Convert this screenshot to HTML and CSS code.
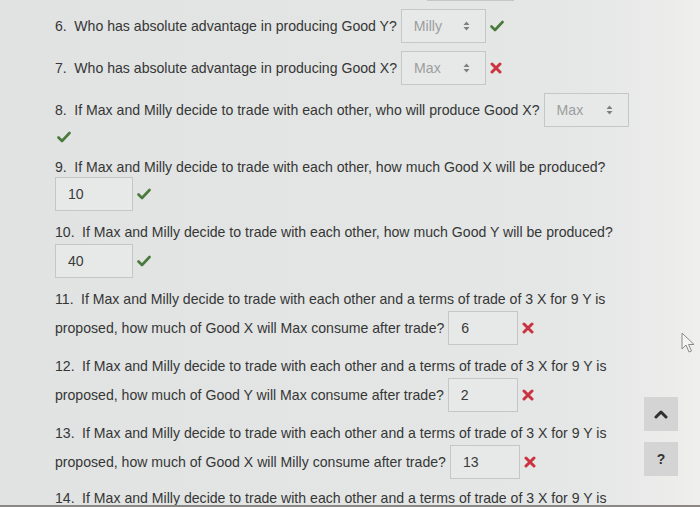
FILE: index.html
```html
<!DOCTYPE html>
<html>
<head>
<meta charset="utf-8">
<link rel="stylesheet" href="styles.css">
</head>
<body>
<div class="page">
  <main class="questions">
    <div class="row prev"><span class="field select"></span></div>

    <div class="row q-first">
      <span class="qtext"><span class="num">6.</span>Who has absolute advantage in producing Good Y?</span>
      <span class="field select"><span>Milly</span><svg class="arrows" width="7" height="10" viewBox="0 0 7 10"><path d="M3.5 0.5 L6.5 4 L0.5 4 Z M0.5 6 L6.5 6 L3.5 9.5 Z"/></svg></span>
      <svg class="mark check" width="14" height="12" viewBox="0 0 14 12"><path d="M1.5 6.5 L5 10 L12.5 2"/></svg>
    </div>

    <div class="row q-tight">
      <span class="qtext"><span class="num">7.</span>Who has absolute advantage in producing Good X?</span>
      <span class="field select"><span>Max</span><svg class="arrows" width="7" height="10" viewBox="0 0 7 10"><path d="M3.5 0.5 L6.5 4 L0.5 4 Z M0.5 6 L6.5 6 L3.5 9.5 Z"/></svg></span>
      <svg class="mark cross" width="12" height="12" viewBox="0 0 12 12"><path d="M2 2 L10 10 M10 2 L2 10"/></svg>
    </div>

    <div class="row q-tight">
      <span class="qtext"><span class="num">8.</span>If Max and Milly decide to trade with each other, who will produce Good X?</span>
      <span class="field select"><span>Max</span><svg class="arrows" width="7" height="10" viewBox="0 0 7 10"><path d="M3.5 0.5 L6.5 4 L0.5 4 Z M0.5 6 L6.5 6 L3.5 9.5 Z"/></svg></span>
    </div>
    <div class="line mark-line">
      <svg class="check" width="14" height="12" viewBox="0 0 14 12"><path d="M1.5 6.5 L5 10 L12.5 2"/></svg>
    </div>

    <div class="line q"><span class="num">9.</span>If Max and Milly decide to trade with each other, how much Good X will be produced?</div>
    <div class="row field-row-first">
      <span class="field input wide">10</span>
      <svg class="mark check" width="14" height="12" viewBox="0 0 14 12"><path d="M1.5 6.5 L5 10 L12.5 2"/></svg>
    </div>

    <div class="line q"><span class="num">10.</span>If Max and Milly decide to trade with each other, how much Good Y will be produced?</div>
    <div class="row field-row">
      <span class="field input wide">40</span>
      <svg class="mark check" width="14" height="12" viewBox="0 0 14 12"><path d="M1.5 6.5 L5 10 L12.5 2"/></svg>
    </div>

    <div class="line q"><span class="num">11.</span>If Max and Milly decide to trade with each other and a terms of trade of 3 X for 9 Y is</div>
    <div class="row field-row">
      <span class="qtext">proposed, how much of Good X will Max consume after trade?</span>
      <span class="field input">6</span>
      <svg class="mark cross" width="12" height="12" viewBox="0 0 12 12"><path d="M2 2 L10 10 M10 2 L2 10"/></svg>
    </div>

    <div class="line q"><span class="num">12.</span>If Max and Milly decide to trade with each other and a terms of trade of 3 X for 9 Y is</div>
    <div class="row field-row">
      <span class="qtext">proposed, how much of Good Y will Max consume after trade?</span>
      <span class="field input">2</span>
      <svg class="mark cross" width="12" height="12" viewBox="0 0 12 12"><path d="M2 2 L10 10 M10 2 L2 10"/></svg>
    </div>

    <div class="line q"><span class="num">13.</span>If Max and Milly decide to trade with each other and a terms of trade of 3 X for 9 Y is</div>
    <div class="row field-row">
      <span class="qtext">proposed, how much of Good X will Milly consume after trade?</span>
      <span class="field input">13</span>
      <svg class="mark cross" width="12" height="12" viewBox="0 0 12 12"><path d="M2 2 L10 10 M10 2 L2 10"/></svg>
    </div>

    <div class="line q last"><span class="num">14.</span>If Max and Milly decide to trade with each other and a terms of trade of 3 X for 9 Y is</div>
  </main>

  <aside class="side">
    <button class="side-btn" type="button" aria-label="Scroll to top">
      <svg width="14" height="10" viewBox="0 0 14 10"><path d="M2 8 L7 3 L12 8"/></svg>
    </button>
    <button class="side-btn help" type="button">?</button>
  </aside>
</div>

<svg class="cursor" width="16" height="22" viewBox="0 0 16 22"><path d="M1 1 L1 17 L5 13 L8 20 L10.5 19 L7.5 12.5 L13 12.5 Z"/></svg>
<div class="bezel"></div>
</body>
</html>
```

FILE: styles.css
```css
html, body {
  margin: 0;
  height: 507px;
  overflow: hidden;
}

body {
  background: linear-gradient(90deg, #e0e3e2 0, #e4e7e6 560px, #e9eae9 640px, #efefed 700px);
  font-family: "Liberation Sans", Arial, sans-serif;
  font-size: 14.1px;
  color: #363636;
}

.page {
  display: flex;
  height: 507px;
}

.questions {
  flex: 1;
  padding-left: 55px;
}

.row {
  display: flex;
  align-items: center;
  height: 34px;
  white-space: nowrap;
}

.prev {
  margin-top: -33px;
  padding-left: 372px;
}

.prev .field {
  width: 87px;
}

.q-first {
  margin-top: 8px;
}

.q-tight {
  margin-top: 8px;
}

.line {
  height: 20px;
  line-height: 20px;
  white-space: nowrap;
}

.line.q {
  margin-top: 11px;
}

.mark-line {
  display: flex;
  align-items: center;
  padding-left: 2px;
}

.line.mark-line + .line.q {
  margin-top: 10px;
}

.line.q.last {
  margin-top: 9px;
}

.field-row-first {
  margin-top: 0;
}

.field-row {
  margin-top: 2px;
}

.num {
  margin-right: 7.5px;
}

.qtext {
  margin-right: 4px;
}

.field {
  box-sizing: border-box;
  height: 34px;
  border: 1px solid #c4c7c6;
  background: #e6e9e8;
  display: flex;
  align-items: center;
  padding: 0 12px;
}

.select {
  width: 85px;
  justify-content: space-between;
  color: #9d9d9d;
  padding-right: 15px;
}

.arrows path {
  fill: #7f7f7f;
}

.input {
  width: 70px;
  color: #3a3a3a;
}

.input.wide {
  width: 78px;
}

.mark {
  margin-left: 4px;
}

.check path {
  fill: none;
  stroke: #4a7a3b;
  stroke-width: 2.6;
  stroke-linecap: round;
  stroke-linejoin: round;
}

.cross path {
  fill: none;
  stroke: #cc3340;
  stroke-width: 3;
  stroke-linecap: round;
}

.side {
  width: 56px;
  padding-top: 397px;
  display: flex;
  flex-direction: column;
  gap: 11px;
}

.side-btn {
  width: 34px;
  height: 34px;
  border: none;
  padding: 0;
  background: #d3d4d3;
  display: flex;
  align-items: center;
  justify-content: center;
  font-family: "Liberation Sans", Arial, sans-serif;
  font-weight: bold;
  font-size: 14px;
  color: #333;
}

.side-btn path {
  fill: none;
  stroke: #2f2f2f;
  stroke-width: 3;
  stroke-linecap: round;
  stroke-linejoin: round;
}

.cursor {
  position: fixed;
  left: 681px;
  top: 332px;
}

.cursor path {
  fill: #f4f4f4;
  stroke: #8a8a8a;
  stroke-width: 1;
  stroke-linejoin: round;
}

.bezel {
  position: fixed;
  left: 0;
  right: 0;
  bottom: 0;
  height: 2px;
  background: #8a8784;
}
```
